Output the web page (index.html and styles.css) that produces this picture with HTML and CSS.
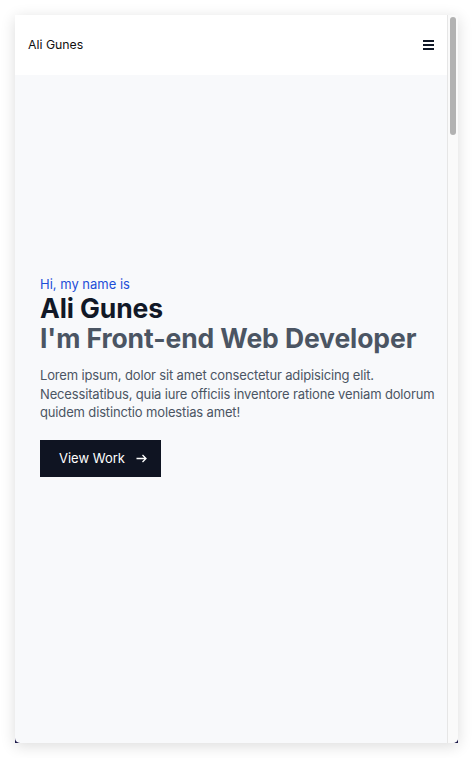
FILE: index.html
```html
<!DOCTYPE html>
<html lang="en">
  <head>
    <meta charset="utf-8" />
    <meta name="viewport" content="width=device-width, initial-scale=1" />
    <title>Ali Gunes | Portfolio</title>
    <link rel="stylesheet" href="styles.css">
  </head>
  <body>
    <div class="frame">
      <div class="window">
        <div class="page">
          <!--top bar with name and menu button-->
          <header class="topbar">
            <a class="brand" href="#">Ali Gunes</a>
            <button class="menu-btn" aria-label="Menu">
              <svg width="11" height="10" viewBox="0 0 11 10">
                <rect x="0" y="0" width="11" height="2" fill="#111827" />
                <rect x="0" y="4" width="11" height="2" fill="#111827" />
                <rect x="0" y="8" width="11" height="2" fill="#111827" />
              </svg>
            </button>
          </header>

          <!--intro section-->
          <section class="hero">
            <p class="hello">Hi, my name is</p>
            <h1 class="name">Ali Gunes</h1>
            <h2 class="role">I'm Front-end Web Developer</h2>
            <p class="intro">Lorem ipsum, dolor sit amet consectetur adipisicing elit. Necessitatibus, quia iure officiis inventore ratione veniam dolorum quidem distinctio molestias amet!</p>
            <a class="btn" href="#">View Work
              <svg class="arrow" width="11" height="9" viewBox="0 0 11 9">
                <path d="M0.5 4.5 H10 M6.5 1 L10 4.5 L6.5 8" stroke="#fff" stroke-width="1.3" fill="none" />
              </svg>
            </a>
          </section>
        </div>
        <div class="scrollbar"><div class="thumb"></div></div>
      </div>
    </div>
  </body>
</html>
```

FILE: styles.css
```css
body{
    margin: 0;
    background-color: #fff;
    font-family: Inter, "Noto Sans", sans-serif;
}

.frame{
    margin: 15px;
    width: 443px;
    height: 728px;
    background-color: #1e1b4b;
    box-shadow: 0 3px 14px rgba(0,0,0,0.14);
}

.window{
    display: flex;
    height: 100%;
    background-color: #f8f9fb;
    border-radius: 0 0 5px 5px;
    overflow: hidden;
}

.page{
    flex: 1;
}

.topbar{
    height: 60px;
    padding: 0 13px;
    display: flex;
    justify-content: space-between;
    align-items: center;
    background-color: #fff;
}

.brand{
    color: #111;
    font-size: 12.3px;
    text-decoration: none;
    margin-top: -1px;
}

.menu-btn{
    border: none;
    background: none;
    padding: 0;
    display: flex;
    margin-top: -1px;
}

/* paragraph runs a bit past the right padding so its lines break like the design */
.hero{
    padding: 200px 0 0 25px;
}

.hello{
    margin: 0;
    color: #1d4ed8;
    font-size: 13px;
    line-height: 18px;
}

.name,
.role{
    margin: 0;
    font-size: 26.5px;
    line-height: 30px;
    font-weight: 700;
    letter-spacing: -0.1px;
}

.name{
    color: #111827;
}

.role{
    color: #4b5563;
}

.intro{
    margin: 13px 0 0;
    color: #4b5563;
    font-size: 13px;
    line-height: 18.5px;
    letter-spacing: -0.15px;
}

.btn{
    display: inline-flex;
    align-items: center;
    margin-top: 18px;
    padding: 0 13px 0 19px;
    height: 37px;
    width: 121px;
    box-sizing: border-box;
    background-color: #0f1422;
    color: #fff;
    font-size: 13px;
    white-space: nowrap;
    text-decoration: none;
}

.arrow{
    flex-shrink: 0;
    margin-left: 11px;
}

.scrollbar{
    width: 10px;
    background-color: #fafafa;
    border-left: 1px solid #e6e6e6;
}

.thumb{
    margin: 2px 2px 0 2px;
    height: 118px;
    background-color: #b2b2b2;
    border-radius: 4px;
}
```
